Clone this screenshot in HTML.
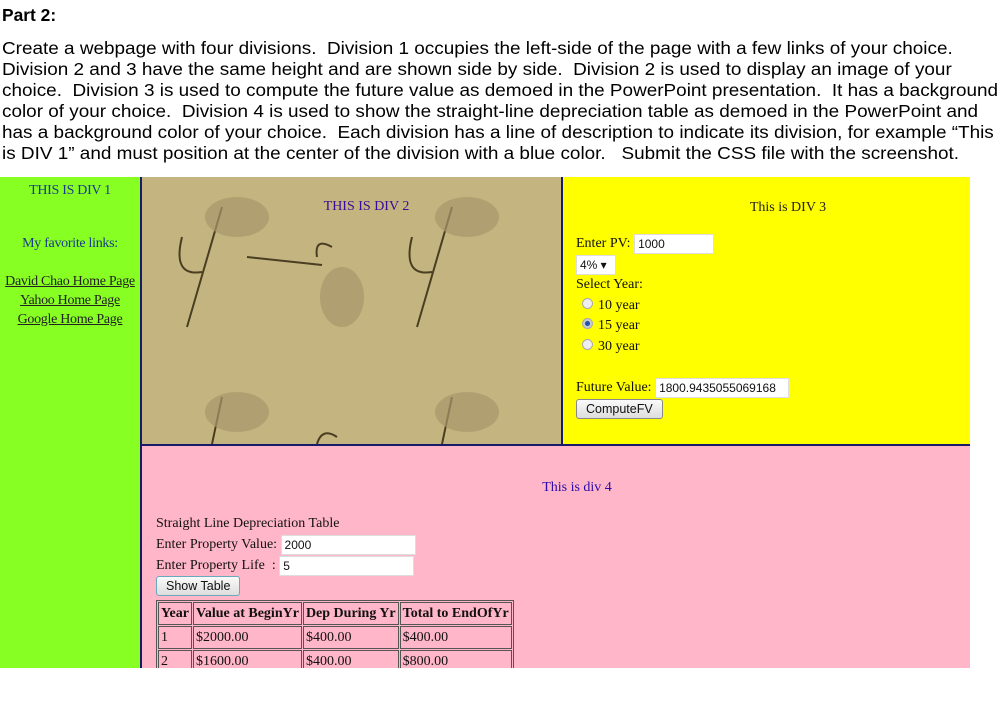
<!DOCTYPE html>
<html><head><style>
body{margin:0;width:1005px;height:712px;background:#fff;position:relative;overflow:hidden;font-family:"Liberation Serif",serif;}
.hdr{position:absolute;left:2px;font-family:"Liberation Sans",sans-serif;font-size:17.4px;color:#000;transform-origin:0 0;}
.a{position:absolute;}
.d1{left:0;top:177px;width:140px;height:491px;background:#88ff22;}
.d2{left:140px;top:177px;width:419px;height:267px;background:#c4b47f;border-left:2px solid #1a1a6a;border-bottom:2px solid #1a1a6a;}
.d3{left:561px;top:177px;width:407px;height:267px;background:#ffff00;border-left:2px solid #1a1a6a;border-bottom:2px solid #1a1a6a;}
.d4{left:140px;top:446px;width:828px;height:222px;background:#ffb6c8;border-left:2px solid #1a1a6a;overflow:hidden;}
.t{font-size:14px;}
a{color:#222;text-decoration:underline;}
.inp{display:inline-block;background:#fff;font-family:"Liberation Sans",sans-serif;font-size:12px;padding:0 3px;height:18px;line-height:18px;vertical-align:middle;border:1px solid #ddd;}
.btn{display:inline-block;font-family:"Liberation Sans",sans-serif;font-size:12.5px;line-height:16px;border:1px solid #888;border-radius:3px;background:linear-gradient(#fafafa,#ddd);padding:1px 9px;}
table{border-collapse:separate;border:1px solid #555;border-spacing:1px;font-size:14px;line-height:21px;}
td,th{border:1px solid #555;padding:0 2px;text-align:left;}
.r{display:inline-block;width:9px;height:9px;border-radius:50%;border:1px solid #aaa;background:#eee;margin:0 5px 0 6px;}
</style></head><body>
<div class="hdr" style="top:5px;font-weight:bold;">Part 2:</div>
<div class="hdr" style="top:38px;line-height:21px;width:1000px;white-space:nowrap;transform:scaleX(1.088);">Create a webpage with four divisions.&nbsp; Division 1 occupies the left-side of the page with a few links of your choice.<br>Division 2 and 3 have the same height and are shown side by side.&nbsp; Division 2 is used to display an image of your<br>choice.&nbsp; Division 3 is used to compute the future value as demoed in the PowerPoint presentation.&nbsp; It has a background<br>color of your choice.&nbsp; Division 4 is used to show the straight-line depreciation table as demoed in the PowerPoint and<br>has a background color of your choice.&nbsp; Each division has a line of description to indicate its division, for example “This<br>is DIV 1” and must position at the center of the division with a blue color.&nbsp;&nbsp; Submit the CSS file with the screenshot.</div>

<div class="a d1 t" style="text-align:center;letter-spacing:-0.3px;">
<div style="color:#1a3a8a;margin-top:6px;">THIS IS DIV 1</div>
<div style="color:#1a3a8a;margin-top:37px;">My favorite links:</div>
<div style="margin-top:20px;line-height:19px;"><a>David Chao Home Page</a><br><a>Yahoo Home Page</a><br><a>Google Home Page</a></div>
</div>

<div class="a d2">
<svg width="419" height="267" style="position:absolute;left:0;top:0">
<g stroke="#4a3e22" fill="none" stroke-width="2">
<path d="M80 30 L45 150"/><path d="M40 60 Q30 100 60 95"/>
<path d="M310 30 L275 150"/><path d="M270 60 Q260 100 290 95"/>
<path d="M105 80 L180 88 M175 80 Q172 60 190 70"/>
<path d="M80 220 L70 267 M310 220 L300 267"/>
<path d="M175 267 Q180 250 195 260"/>
</g>
<g fill="#a8966a" opacity=".7">
<ellipse cx="95" cy="40" rx="32" ry="20"/><ellipse cx="325" cy="40" rx="32" ry="20"/>
<ellipse cx="200" cy="120" rx="22" ry="30"/><ellipse cx="95" cy="235" rx="32" ry="20"/><ellipse cx="325" cy="235" rx="32" ry="20"/>
</g></svg>
<div class="t" style="position:absolute;left:0;width:449px;top:22px;text-align:center;color:#3a0a9a;">THIS IS DIV 2</div>
</div>

<div class="a d3 t">
<div style="position:absolute;left:0;width:450px;top:23px;text-align:center;color:#222;">This is DIV 3</div>
<div style="position:absolute;left:13px;top:57px;line-height:20.5px;color:#111;">
Enter PV: <span class="inp" style="width:72px">1000</span><br>
<span class="inp" style="width:32px">4% ▾</span><br>
Select Year:<br>
<span class="r"></span>10 year<br>
<span class="r" style="background:radial-gradient(#2255aa 35%,#ccc 45%)"></span>15 year<br>
<span class="r"></span>30 year<br><br>
Future Value: <span class="inp" style="width:126px">1800.9435055069168</span><br>
<span class="btn">ComputeFV</span>
</div></div>

<div class="a d4 t">
<div style="position:absolute;left:0;width:870px;top:34px;text-align:center;color:#2a0aaa;">This is div 4</div>
<div style="position:absolute;left:14px;top:67px;line-height:21px;color:#111;">
Straight Line Depreciation Table<br>
Enter Property Value: <span class="inp" style="width:127px">2000</span><br>
Enter Property Life&nbsp; : <span class="inp" style="width:127px">5</span><br>
<span class="btn" style="border-color:#6ab">Show Table</span>
<table style="margin-top:3px;"><tr><th>Year</th><th>Value at BeginYr</th><th>Dep During Yr</th><th>Total to EndOfYr</th></tr>
<tr><td>1</td><td>$2000.00</td><td>$400.00</td><td>$400.00</td></tr>
<tr><td>2</td><td>$1600.00</td><td>$400.00</td><td>$800.00</td></tr></table>
</div></div>
</body></html>
